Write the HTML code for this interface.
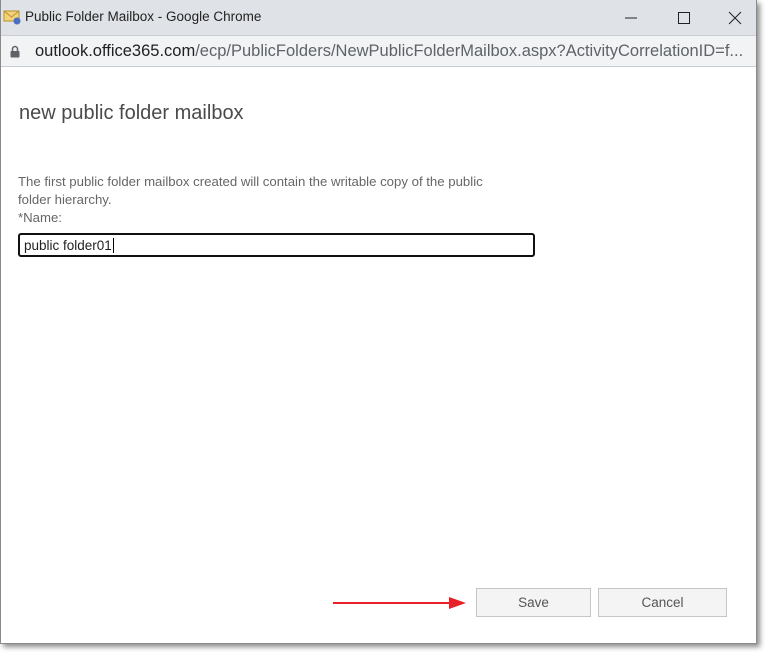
<!DOCTYPE html>
<html><head><style>
body{margin:0;width:768px;height:654px;background:#fff;position:relative;overflow:hidden;font-family:"Liberation Sans",sans-serif}
.win{position:absolute;left:0;top:0;width:757px;height:644px;border:1px solid #8a8a8a;border-top:none;box-shadow:3px 3px 5px rgba(0,0,0,.45);background:#fff;box-sizing:border-box}
.title{position:absolute;left:0;top:0;width:100%;height:35px;background:#dfe2e6}
.title span{position:absolute;left:24px;top:9px;font-size:13.5px;color:#222}
.addr{position:absolute;left:0;top:35px;width:100%;height:32px;background:#f1f3f4;border-top:1px solid #c9ccd0;border-bottom:1px solid #c9ccd0;box-sizing:border-box}
.addr span{position:absolute;left:34px;top:6px;font-size:16.5px;color:#5f6368;white-space:nowrap}
.addr b{font-weight:normal;color:#202124}
h1{position:absolute;left:18px;top:102px;margin:0;font-weight:normal;font-size:20px;color:#4a4a4a}
.txt{position:absolute;left:17px;top:173px;width:500px;font-size:13.2px;line-height:18px;color:#666}
.inp{position:absolute;left:17px;top:233px;width:517px;height:24px;border:2px solid #111;border-radius:3px;box-sizing:border-box;font-size:13.5px;color:#222;padding:3px 4px}
.btn{position:absolute;top:588px;height:29px;border:1px solid #c6c6c6;background:#f4f4f4;box-sizing:border-box;font-size:13.5px;color:#555;text-align:center;line-height:27px}
</style></head><body>
<div class="win">
<div class="title">
<svg style="position:absolute;left:2px;top:8px" width="20" height="18"><rect x="1" y="3" width="15" height="10" fill="#f2d27a" stroke="#b8902a"/><path d="M1 3 L8.5 9 L16 3" fill="none" stroke="#b8902a"/><circle cx="14" cy="13" r="3.5" fill="#4a6fc0"/></svg>
<span>Public Folder Mailbox - Google Chrome</span>
<svg style="position:absolute;left:622px;top:10px" width="130" height="16"><line x1="2" y1="8" x2="14" y2="8" stroke="#222"/><rect x="55.5" y="2.5" width="11" height="11" fill="none" stroke="#222"/><path d="M106 2 L118 14 M118 2 L106 14" stroke="#222"/></svg>
</div>
<div class="addr">
<svg style="position:absolute;left:9px;top:9px" width="10" height="13"><path d="M2.5 6 V4 a2.5 2.5 0 0 1 5 0 V6" fill="none" stroke="#5f6368" stroke-width="1.5"/><rect x="0.5" y="6" width="9" height="6.5" rx="1" fill="#5f6368"/></svg>
<span><b>outlook.office365.com</b>/ecp/PublicFolders/NewPublicFolderMailbox.aspx?ActivityCorrelationID=f...</span>
</div>
<h1>new public folder mailbox</h1>
<div class="txt">The first public folder mailbox created will contain the writable copy of the public folder hierarchy.<br>*Name:</div>
<div class="inp">public folder01<span style="border-left:1px solid #000;margin-left:1px"></span></div>
<svg style="position:absolute;left:330px;top:596px" width="140" height="14"><line x1="2" y1="7" x2="120" y2="7" stroke="#e8202a" stroke-width="2"/><path d="M118 1 L135 7 L118 13 Z" fill="#e8202a"/></svg>
<div class="btn" style="left:475px;width:115px">Save</div>
<div class="btn" style="left:597px;width:129px">Cancel</div>
</div>
</body></html>
